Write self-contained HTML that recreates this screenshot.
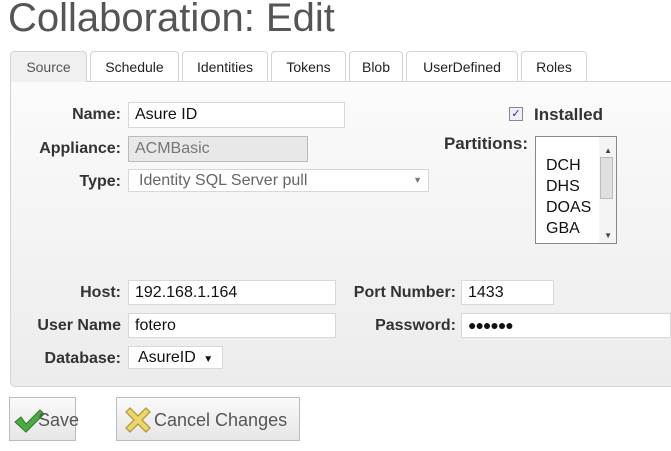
<!DOCTYPE html>
<html><head><style>
body{margin:0;width:671px;height:451px;overflow:hidden;background:#fff;font-family:"Liberation Sans",sans-serif;position:relative}
.a{position:absolute}
h1{position:absolute;left:8px;top:-4px;margin:0;font-weight:normal;font-size:40px;color:#555}
.tab{position:absolute;top:51px;height:30px;border:1px solid #d4d4d4;border-bottom:none;border-radius:4px 4px 0 0;background:#fff;font-size:14px;color:#222;text-align:center;line-height:30px;box-sizing:border-box}
.panel{position:absolute;left:10px;top:81px;width:670px;height:306px;border:1px solid #d4d4d4;border-radius:0 0 0 5px;background:linear-gradient(#fbfbfb,#ececec);box-sizing:border-box}
.lbl{position:absolute;font-weight:bold;font-size:16px;color:#333;text-align:right}
.in{position:absolute;background:#fff;border:1px solid #d8d8d8;box-sizing:border-box;font-size:16px;color:#111;padding-left:6px;line-height:23px}
.btn{position:absolute;top:397px;height:44px;border:1px solid #bbb;background:linear-gradient(#fafafa,#e6e6e6);box-sizing:border-box;font-size:18px;color:#555;line-height:44px}
</style></head><body>
<h1>Collaboration: Edit</h1>
<div class="panel"></div>
<div class="tab" style="left:10px;width:77px;background:#f0f0f0;color:#555;height:31px">Source</div>
<div class="tab" style="left:90px;width:89px">Schedule</div>
<div class="tab" style="left:182px;width:86px">Identities</div>
<div class="tab" style="left:271px;width:75px">Tokens</div>
<div class="tab" style="left:349px;width:54px">Blob</div>
<div class="tab" style="left:406px;width:112px">UserDefined</div>
<div class="tab" style="left:521px;width:66px">Roles</div>

<div class="lbl" style="right:550px;top:106px">Name:</div>
<div class="in" style="left:128px;top:102px;width:217px;height:26px">Asure ID</div>
<div class="lbl" style="right:550px;top:140px">Appliance:</div>
<div class="in" style="left:128px;top:136px;width:180px;height:26px;background:#e8e8e8;border-color:#bbb;color:#777">ACMBasic</div>
<div class="lbl" style="right:550px;top:173px">Type:</div>
<div class="in" style="left:128px;top:169px;width:301px;height:23px;color:#666;line-height:21px;padding-left:10px">Identity SQL Server pull<span class="a" style="right:6px;top:0;font-size:9px;color:#777">▼</span></div>

<div class="a" style="left:509px;top:107px;width:14px;height:14px;border:1px solid #888;box-sizing:border-box;background:#eef;font-size:11px;line-height:12px;text-align:center;color:#336">✓</div>
<div class="lbl" style="left:534px;top:105px;font-size:17px">Installed</div>
<div class="lbl" style="right:143px;top:134px;font-size:17px">Partitions:</div>
<div class="a" style="left:535px;top:136px;width:82px;height:108px;border:1px solid #888;background:#fff;box-sizing:border-box;font-size:16px;color:#111;line-height:21px">
<div class="a" style="left:10px;top:18px">DCH<br>DHS<br>DOAS<br>GBA</div>
<div class="a" style="right:0;top:0;width:17px;height:106px;background:#f4f4f4"></div>
<div class="a" style="right:3px;top:20px;width:11px;height:40px;background:#e0e0e0;border:1px solid #bbb"></div>
<div class="a" style="right:4px;top:3px;font-size:8px;color:#444">▲</div>
<div class="a" style="right:4px;top:88px;font-size:8px;color:#444">▼</div>
</div>

<div class="lbl" style="right:550px;top:284px">Host:</div>
<div class="in" style="left:128px;top:280px;width:208px;height:25px">192.168.1.164</div>
<div class="lbl" style="right:215px;top:284px">Port Number:</div>
<div class="in" style="left:461px;top:280px;width:93px;height:25px">1433</div>
<div class="lbl" style="right:550px;top:317px">User Name</div>
<div class="in" style="left:128px;top:313px;width:208px;height:25px">fotero</div>
<div class="lbl" style="right:215px;top:317px">Password:</div>
<div class="in" style="left:461px;top:313px;width:210px;height:25px;font-size:14px;letter-spacing:-1px">●●●●●●</div>
<div class="lbl" style="right:550px;top:350px">Database:</div>
<div class="in" style="left:128px;top:346px;width:95px;height:23px;line-height:21px;padding-left:9px">AsureID <span style="font-size:10px;margin-left:3px">▼</span></div>

<div class="btn" style="left:9px;width:67px">
<svg class="a" style="left:3px;top:10px" width="32" height="26" viewBox="0 0 32 26"><path d="M2 14 L8 9 L13 16 L27 2 L31 6 L13 24 Z" fill="#4caa44" stroke="#2e7a2a" stroke-width="1"/></svg>
<span class="a" style="left:28px">Save</span></div>
<div class="btn" style="left:116px;width:184px">
<svg class="a" style="left:6px;top:7px" width="30" height="30" viewBox="0 0 30 30"><path d="M3 7 L7 3 L15 11 L23 3 L27 7 L19 15 L27 23 L23 27 L15 19 L7 27 L3 23 L11 15 Z" fill="#ecd76a" stroke="#b09a3a" stroke-width="1.3"/></svg>
<span class="a" style="left:37px">Cancel Changes</span></div>
</body></html>
